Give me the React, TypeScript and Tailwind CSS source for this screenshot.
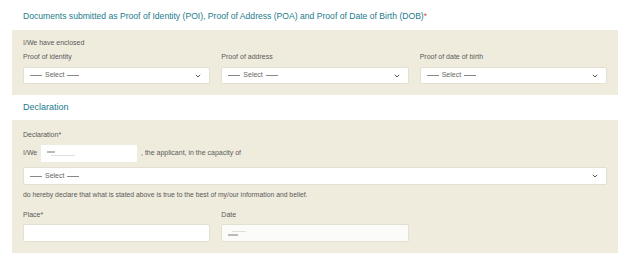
import React from "react";

const Chevron = () => (
  <svg width="6" height="4" viewBox="0 0 6 4" className="shrink-0">
    <path d="M0.8 0.8 L3 3 L5.2 0.8" fill="none" stroke="#555" strokeWidth="1" />
  </svg>
);

const Dash = () => <span className="inline-block h-px w-[12px] bg-[#888] align-middle" />;

const Select = ({ className = "" }: { className?: string }) => (
  <div
    className={`flex h-[17px] items-center justify-between rounded-[2px] border border-[#e3e0d2] bg-white pl-[6px] pr-[8px] text-[7px] text-[#666] ${className}`}
  >
    <span className="flex items-center gap-[3px]">
      <Dash />
      <span>Select</span>
      <Dash />
    </span>
    <Chevron />
  </div>
);

export default function App() {
  return (
    <div
      className="h-[261px] w-[630px] overflow-hidden bg-white text-[#5a5a5a]"
      style={{ fontFamily: '"Liberation Sans", Arial, sans-serif' }}
    >
      <div className="flex h-[30px] items-center px-[23px] pt-[2px] text-[8.6px] text-[#1c7c8b]">
        Documents submitted as Proof of Identity (POI), Proof of Address (POA) and Proof of Date of Birth (DOB)
        <span className="text-[#d9534f]">*</span>
      </div>

      <div className="mx-[12px] h-[65px] bg-[#efecdd] px-[11px] pt-[6px]">
        <div className="text-[7px] leading-[14px]">I/We have enclosed</div>
        <div className="grid grid-cols-3 gap-x-[11px]">
          {["Proof of identity", "Proof of address", "Proof of date of birth"].map((l) => (
            <div key={l} className="flex flex-col">
              <div className="text-[7px] leading-[14px]">{l}</div>
              <Select className="mt-[3px]" />
            </div>
          ))}
        </div>
      </div>

      <div className="flex h-[25px] items-center px-[23px] text-[9px] text-[#1c7c8b]">Declaration</div>

      <div className="mx-[12px] h-[133px] bg-[#efecdd] px-[11px] pt-[8px]">
        <div className="text-[7px] leading-[14px]">Declaration*</div>
        <div className="mt-[3px] flex h-[17px] items-center text-[7px]">
          <span className="w-[18px]">I/We</span>
          <div className="flex h-[17px] w-[96px] items-center bg-white pl-[6px]">
            <div className="flex flex-col gap-[2px] blur-[0.6px]">
              <div className="h-[1.5px] w-[8px] bg-[#bbb]" />
              <div className="ml-[4px] h-[1.5px] w-[24px] bg-[#ddd]" />
            </div>
          </div>
          <span className="ml-[4px]">, the applicant, in the capacity of</span>
        </div>
        <Select className="mt-[5px] h-[18px]" />
        <div className="mt-[3px] text-[6.8px] leading-[14px]">
          do hereby declare that what is stated above is true to the best of my/our information and belief.
        </div>
        <div className="mt-[6px] grid grid-cols-3 gap-x-[11px]">
          <div className="flex flex-col">
            <div className="text-[7px] leading-[14px]">Place*</div>
            <div className="mt-[2px] h-[18px] rounded-[2px] border border-[#e3e0d2] bg-white" />
          </div>
          <div className="flex flex-col">
            <div className="text-[7px] leading-[14px]">Date</div>
            <div className="mt-[2px] flex h-[18px] items-center rounded-[2px] border border-[#e3e0d2] bg-[#fbfbf9] pl-[6px]">
              <div className="flex flex-col gap-[2px] blur-[0.6px]">
                <div className="ml-[4px] h-[1.5px] w-[14px] bg-[#ddd]" />
                <div className="h-[1.5px] w-[10px] bg-[#bbb]" />
              </div>
            </div>
          </div>
        </div>
      </div>
    </div>
  );
}
